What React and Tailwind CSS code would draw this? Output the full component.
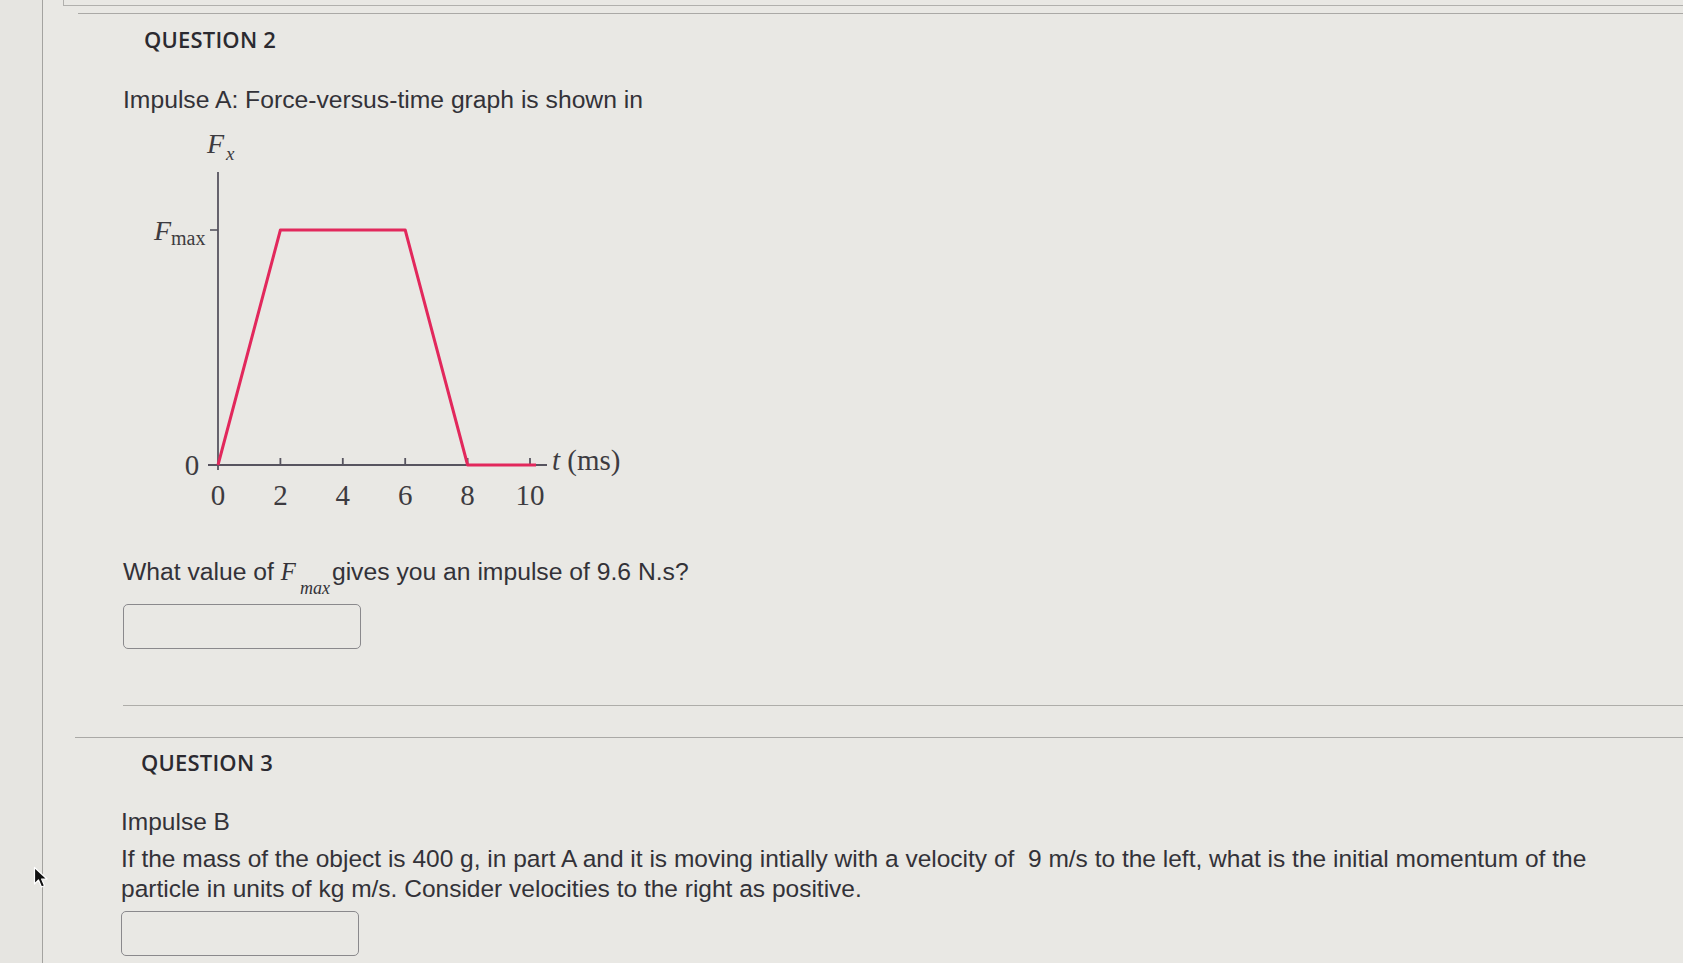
import React from 'react'

const ticks = [0, 2, 4, 6, 8, 10]
const tickX = (t) => 95 + t * 31.2

function ForceGraph() {
  return (
    <svg width="540" height="400" viewBox="0 0 540 400" className="mt-[2px] block">
      {/* axes */}
      <line x1="95" y1="54" x2="95" y2="352" stroke="#57545f" strokeWidth="1.8" />
      <line x1="85" y1="347" x2="424" y2="347" stroke="#57545f" strokeWidth="1.8" />
      <line x1="87" y1="112" x2="95" y2="112" stroke="#57545f" strokeWidth="1.6" />
      {ticks.slice(1).map((t) => (
        <line key={t} x1={tickX(t)} y1="340" x2={tickX(t)} y2="347" stroke="#57545f" strokeWidth="1.8" />
      ))}

      {/* force curve */}
      <polyline
        points="95,347 157.4,112 282.2,112 344.6,347 413,347"
        fill="none"
        stroke="#e2285c"
        strokeWidth="3"
        strokeLinejoin="round"
      />

      <g fill="#3d3b40" fontFamily="'Liberation Serif', 'Times New Roman', serif">
        <text x="84" y="35" fontSize="28" fontStyle="italic">F</text>
        <text x="103" y="42" fontSize="19" fontStyle="italic">x</text>

        <text x="31" y="122" fontSize="28" fontStyle="italic">F</text>
        <text x="48" y="127" fontSize="20">max</text>

        <text x="69" y="357" fontSize="29" textAnchor="middle">0</text>
        {ticks.map((t) => (
          <text key={t} x={tickX(t)} y="387" fontSize="29" textAnchor="middle">{t}</text>
        ))}
        <text x="429" y="352" fontSize="29">
          <tspan fontStyle="italic">t</tspan> (ms)
        </text>
      </g>
    </svg>
  )
}

function AnswerBox() {
  return <div className="h-[45px] w-[238px] rounded-[5px] border-[1.5px] border-[#8a898c]" />
}

export default function App() {
  return (
    <div className="relative flex h-[963px] w-full overflow-hidden bg-[#e9e8e4] font-['Liberation_Sans',Arial,sans-serif] text-[#333238]">
      <aside className="w-[43px] shrink-0 border-r border-[#a4a3a0] bg-[#e6e5e1]" />

      <main className="min-w-0 flex-1">
        <div className="ml-[20px] h-[6px] border-b border-l border-[#b1b0ad]" />

        <section className="ml-[35px] mt-[7px] border-t border-[#aaa9a6]">
          <h2 className="pl-[66px] pt-[11px] font-['Open_Sans',sans-serif] text-[22px] font-semibold leading-[28px] tracking-[0.2px] text-[#2b2a30]">
            QUESTION 2
          </h2>
          <div className="pl-[45px]">
            <p className="mt-[31px] text-[24.7px] leading-[32px]">Impulse A: Force-versus-time graph is shown in</p>
            <ForceGraph />
            <p className="mt-[38px] text-[24.7px] leading-[32px]">
              What value of{' '}
              <span className="font-['Liberation_Serif',serif] italic">F</span>
              <sub className="-bottom-[14px] ml-[4px] mr-[2px] font-['Liberation_Serif',serif] text-[18px] italic">max</sub>
              gives you an impulse of 9.6 N.s?
            </p>
            <div className="mt-[16px]">
              <AnswerBox />
            </div>
            <div className="mt-[56px] border-t border-[#aeada9]" />
          </div>
        </section>

        <section className="ml-[32px] mt-[31px] border-t border-[#aaa9a6] pr-[40px]">
          <h2 className="pl-[66px] pt-[10px] font-['Open_Sans',sans-serif] text-[22px] font-semibold leading-[28px] tracking-[0.2px] text-[#2b2a30]">
            QUESTION 3
          </h2>
          <div className="pl-[46px]">
            <p className="mt-[31px] text-[24.5px] leading-[30px]">Impulse B</p>
            <p className="mt-[7px] text-[24.5px] leading-[30px]">
              If the mass of the object is 400 g, in part A and it is moving intially with a velocity of&nbsp; 9 m/s to the left, what is the initial momentum of the particle in units of kg m/s. Consider velocities to the right as positive.
            </p>
            <div className="mt-[7px]">
              <AnswerBox />
            </div>
          </div>
        </section>
      </main>

      {/* mouse pointer */}
      <svg className="absolute left-[33px] top-[866px]" width="16" height="24" viewBox="0 0 16 24">
        <path d="M1.5 1.5 L1.5 18 L5.5 14 L8.5 21 L11.5 19.8 L8.6 13 L14 13 Z" fill="#111" stroke="#fff" strokeWidth="1.2" strokeLinejoin="round" />
      </svg>
    </div>
  )
}
